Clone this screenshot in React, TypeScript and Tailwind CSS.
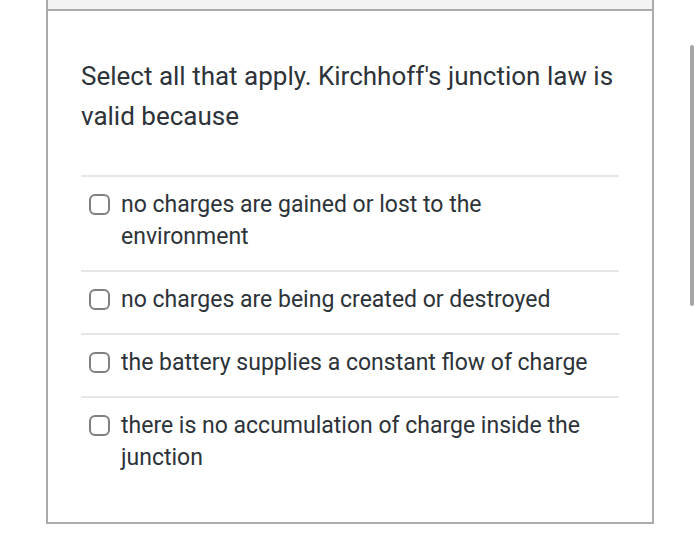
import React from 'react';

const options = [
  'no charges are gained or lost to the environment',
  'no charges are being created or destroyed',
  'the battery supplies a constant flow of charge',
  'there is no accumulation of charge inside the junction',
];

export default function App() {
  return (
    <div className="relative w-[700px] h-[552px] bg-white overflow-hidden" style={{ fontFamily: 'Roboto, "Noto Sans", sans-serif' }}>
      <div className="ml-[46px] w-[608px]">
        {/* previous panel (cut off at top) */}
        <div className="h-[11px] bg-[#f3f3f3] border-x-2 border-b-2 border-[#ababab]" />

        {/* question card */}
        <div className="h-[513px] border-x-2 border-b-2 border-[#ababab] px-[33px] pt-[45px]">
          <p className="text-[26px] leading-[40px] text-[#2d3339]">
            Select all that apply. Kirchhoff's junction law is valid because
          </p>

          <div className="mt-[39px]">
            {options.map((opt) => (
              <div key={opt} className="border-t-2 border-[#e6e6e6] pt-[12px] pb-[17px] flex items-start">
                <span className="mt-[5px] ml-[8px] mr-[11px] w-[21px] h-[21px] shrink-0 rounded-[6px] border-2 border-[#808080]" />
                <span className="text-[23px] leading-[32px] text-[#2d3339] pr-[30px]">{opt}</span>
              </div>
            ))}
          </div>
        </div>
      </div>

      {/* scrollbar */}
      <div className="absolute left-[690px] top-[45px] w-[4px] h-[261px] rounded-full bg-[#a6a6a6]" />
    </div>
  );
}
